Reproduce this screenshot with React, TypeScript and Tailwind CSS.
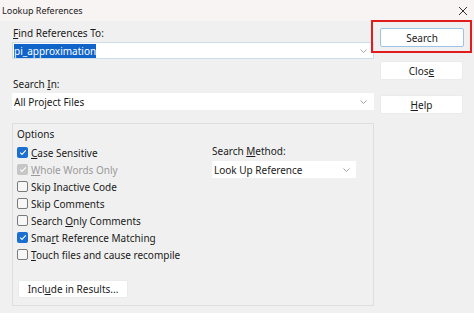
import React from "react";

const F = { fontFamily: '"Noto Sans", "Open Sans", sans-serif' };

function Chevron({ className = "" }: { className?: string }) {
  return (
    <svg width="7" height="4" viewBox="0 0 7 4" className={className}>
      <path d="M0.5 0.5 L3.5 3.5 L6.5 0.5" fill="none" stroke="#9a9a9a" strokeWidth="0.9" />
    </svg>
  );
}

function Box({ checked, disabled }: { checked?: boolean; disabled?: boolean }) {
  if (checked) {
    return (
      <span
        className={`w-[11px] h-[11px] rounded-[2px] flex items-center justify-center shrink-0 ${
          disabled ? "bg-[#c6c6c6]" : "bg-[#1a6fd1]"
        }`}
      >
        <svg width="8" height="7" viewBox="0 0 8 7">
          <path d="M1.2 3.6 L3 5.4 L6.8 1.4" fill="none" stroke="white" strokeWidth="1.1" />
        </svg>
      </span>
    );
  }
  return <span className="w-[11px] h-[11px] rounded-[2px] border border-[#7a7a7a] bg-[#f7f7f7] shrink-0" />;
}

function Check({
  children,
  checked,
  disabled,
}: {
  children: React.ReactNode;
  checked?: boolean;
  disabled?: boolean;
}) {
  return (
    <div className="flex items-center h-[17px] gap-[3px] whitespace-nowrap">
      <Box checked={checked} disabled={disabled} />
      <span className={disabled ? "text-[#9a9a9a]" : "text-[#1a1a1a]"}>{children}</span>
    </div>
  );
}

function Btn({ children, className = "" }: { children: React.ReactNode; className?: string }) {
  return (
    <div
      className={`bg-white flex items-center justify-center text-[#1a1a1a] border border-[#ebebeb] rounded-[2px] whitespace-nowrap ${className}`}
    >
      <span>{children}</span>
    </div>
  );
}

export default function App() {
  return (
    <div className="w-[474px] h-[323px] bg-white overflow-hidden text-[10px] leading-none" style={F}>
      <div className="w-[474px] h-[313px] bg-[#f0f0f0] flex flex-col">
        {/* title bar */}
        <div className="h-[21px] bg-[#f8f4f4] flex items-center justify-between pl-[2px] pr-[6px] shrink-0">
          <span className="text-[#1a1a1a] text-[9px]">Lookup References</span>
          <svg width="10" height="10" viewBox="0 0 10 10">
            <path d="M1 1 L9 9 M9 1 L1 9" stroke="#333" strokeWidth="1" />
          </svg>
        </div>
        <div className="flex flex-1 pl-[12px]">
          {/* left column */}
          <div className="w-[362px] flex flex-col">
            <div className="mt-[5px] pl-[1px] h-[14px] flex items-center text-[#1a1a1a]">
              <span>
                <u>F</u>ind References To:
              </span>
            </div>
            <div className="mt-[2px] h-[17px] bg-white border border-[#cfdcea] flex items-center pl-[1px] pr-[6px] justify-between">
              <span className="bg-[#0f63c9] text-white h-[14px] flex items-center">pi_approximation</span>
              <Chevron />
            </div>
            <div className="mt-[18px] pl-[1px] h-[14px] flex items-center text-[#1a1a1a]">
              <span>
                Search <u>I</u>n:
              </span>
            </div>
            <div className="mt-[2px] h-[17px] bg-white flex items-center pl-[2px] pr-[7px] justify-between text-[#1a1a1a]">
              <span>All Project Files</span>
              <Chevron />
            </div>
            {/* options group */}
            <div className="mt-[13px] h-[183px] border border-[#dedede] flex flex-col pl-[4px]">
              <div className="mt-[3px] h-[14px] flex items-center text-[#1a1a1a]">
                <span>Options</span>
              </div>
              <div className="flex mt-[3px]">
                <div className="w-[195px] flex flex-col">
                  <Check checked>
                    <u>C</u>ase Sensitive
                  </Check>
                  <Check checked disabled>
                    <u>W</u>hole Words Only
                  </Check>
                  <Check>Skip Inactive Code</Check>
                  <Check>Skip Comments</Check>
                  <Check>
                    Search <u>O</u>nly Comments
                  </Check>
                  <Check checked>
                    Sma<u>r</u>t Reference Matching
                  </Check>
                  <Check>
                    <u>T</u>ouch files and cause recompile
                  </Check>
                </div>
                <div className="flex flex-col">
                  <div className="mt-[0px] h-[14px] flex items-center text-[#1a1a1a]">
                    <span>
                      Search <u>M</u>ethod:
                    </span>
                  </div>
                  <div className="mt-[3px] w-[144px] h-[17px] bg-white flex items-center pl-[2px] pr-[6px] justify-between text-[#1a1a1a]">
                    <span>Look Up Reference</span>
                    <Chevron />
                  </div>
                </div>
              </div>
              <Btn className="mt-[17px] ml-[1px] w-[110px] h-[18px]">
                Incl<u>u</u>de in Results...
              </Btn>
            </div>
          </div>
          {/* right buttons */}
          <div className="flex flex-col ml-[4px] pt-[7px]">
            <div className="relative">
              <Btn className="w-[84px] h-[19px] !border-[#9cc3e6] ml-[2px]">Search</Btn>
              <div className="absolute left-[-7px] top-[-8px] w-[101px] h-[33px] border-2 border-[#e01c1c]" />
            </div>
            <Btn className="mt-[14px] w-[83px] h-[19px] ml-[2px]">
              Clos<u>e</u>
            </Btn>
            <Btn className="mt-[15px] w-[83px] h-[19px] ml-[2px]">
              <u>H</u>elp
            </Btn>
          </div>
        </div>
      </div>
    </div>
  );
}
